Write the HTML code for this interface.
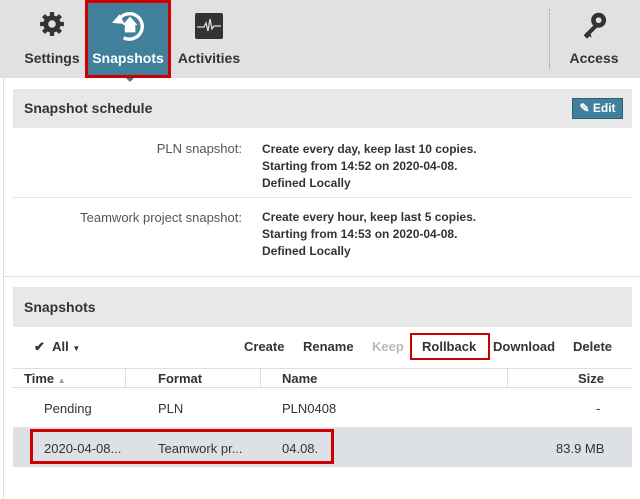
<!DOCTYPE html>
<html><head><style>
*{margin:0;padding:0;box-sizing:border-box}
body{width:640px;height:499px;background:#fff;font-family:"Liberation Sans",sans-serif;font-size:13px;color:#333;position:relative;overflow:hidden}
.a{position:absolute}
.b{font-weight:bold}
.tab{position:absolute;top:0;height:78px;text-align:center;font-weight:bold;font-size:14px;color:#333}
.tab span{position:absolute;left:0;right:0;top:50px}
</style></head><body>
<div class="a" style="left:0;top:0;width:640px;height:78px;background:#e1e1e1"></div>
<div class="tab" style="left:20px;width:64px"><svg class="a" style="left:19px;top:11px" width="26" height="26" viewBox="0 0 24 24"><g fill="#333"><circle cx="12" cy="12" r="8"/><rect x="10" y="1" width="4" height="22"/><rect x="1" y="10" width="22" height="4"/><rect x="10" y="1" width="4" height="22" transform="rotate(45 12 12)"/><rect x="10" y="1" width="4" height="22" transform="rotate(-45 12 12)"/></g><circle cx="12" cy="12" r="3.5" fill="#e1e1e1"/></svg><span>Settings</span></div>
<div class="tab" style="left:85px;width:86px;background:#40809b;border:3px solid #c00;color:#fff"><svg class="a" style="left:23px;top:5px" width="36" height="34" viewBox="0 0 34 32"><path d="M8 10 A12 12 0 1 1 12 28" fill="none" stroke="#fff" stroke-width="3.2"/><path d="M1 14 L8 6 L13 15 Z" fill="#fff"/><path d="M11 16 L18 8 L25 16 H23 V23 H13 V16Z" fill="#fff"/></svg><span style="top:47px">Snapshots</span></div>
<div class="a" style="left:126px;top:78px;border:4px solid transparent;border-top-color:#40809b"></div>
<div class="tab" style="left:174px;width:70px"><svg class="a" style="left:21px;top:13px" width="28" height="26" viewBox="0 0 28 26"><rect width="28" height="26" rx="2" fill="#333"/><path d="M2 14 H9 L11 10 L13 18 L15 6 L17 16 L19 13 H26" fill="none" stroke="#ddd" stroke-width="1.3"/></svg><span>Activities</span></div>
<div class="a" style="left:549px;top:9px;height:60px;border-left:1px dotted #999"></div>
<div class="tab" style="left:565px;width:58px"><svg class="a" style="left:15px;top:11px" width="28" height="30" viewBox="0 0 24 26"><circle cx="16" cy="8" r="6.5" fill="#333"/><circle cx="16" cy="8" r="2.5" fill="#e1e1e1"/><path d="M12 12 L3 21 L6 24 L8 22 L10 23 L9 20 L15 14Z" fill="#333"/></svg><span>Access</span></div>
<div class="a" style="left:3px;top:78px;height:421px;border-left:1px solid #ddd"></div>
<div class="a" style="left:13px;top:89px;width:619px;height:39px;background:#e8e8e8"></div>
<div class="a b" style="left:24px;top:100px;font-size:14px">Snapshot schedule</div>
<div class="a b" style="left:572px;top:98px;width:51px;height:21px;background:#40809b;border:1px solid #2c6077;color:#fff;font-size:12px;line-height:19px;text-align:center">✎ Edit</div>
<div class="a" style="left:0;top:141px;width:242px;text-align:right;color:#555">PLN snapshot:</div>
<div class="a b" style="left:262px;top:141px;line-height:17px;font-size:12px">Create every day, keep last 10 copies.<br>Starting from 14:52 on 2020-04-08.<br>Defined Locally</div>
<div class="a" style="left:13px;top:197px;width:619px;border-top:1px solid #e5e5e5"></div>
<div class="a" style="left:0;top:210px;width:242px;text-align:right;color:#555">Teamwork project snapshot:</div>
<div class="a b" style="left:262px;top:209px;line-height:17px;font-size:12px">Create every hour, keep last 5 copies.<br>Starting from 14:53 on 2020-04-08.<br>Defined Locally</div>
<div class="a" style="left:3px;top:276px;width:637px;border-top:1px solid #e0e0e0"></div>
<div class="a" style="left:13px;top:287px;width:619px;height:40px;background:#e8e8e8"></div>
<div class="a b" style="left:24px;top:299px;font-size:14px">Snapshots</div>
<div class="a b" style="left:34px;top:339px;font-size:13px">✔ &nbsp;All <span style="font-size:8px">▼</span></div>
<div class="a b" style="left:244px;top:339px">Create</div>
<div class="a b" style="left:303px;top:339px">Rename</div>
<div class="a b" style="left:372px;top:339px;color:#bbb">Keep</div>
<div class="a" style="left:410px;top:333px;width:80px;height:27px;border:2px solid #c00"></div>
<div class="a b" style="left:422px;top:339px">Rollback</div>
<div class="a b" style="left:493px;top:339px">Download</div>
<div class="a b" style="left:573px;top:339px">Delete</div>
<div class="a" style="left:13px;top:368px;width:619px;height:20px;border-top:1px solid #ddd;border-bottom:1px solid #ddd"></div>
<div class="a" style="left:125px;top:368px;height:20px;border-left:1px solid #ddd"></div>
<div class="a" style="left:260px;top:368px;height:20px;border-left:1px solid #ddd"></div>
<div class="a" style="left:507px;top:368px;height:20px;border-left:1px solid #ddd"></div>
<div class="a b" style="left:24px;top:371px">Time <span style="font-size:8px;color:#999">▲</span></div>
<div class="a b" style="left:158px;top:371px">Format</div>
<div class="a b" style="left:282px;top:371px">Name</div>
<div class="a b" style="left:578px;top:371px">Size</div>
<div class="a" style="left:44px;top:401px">Pending</div>
<div class="a" style="left:158px;top:401px">PLN</div>
<div class="a" style="left:282px;top:401px">PLN0408</div>
<div class="a" style="left:596px;top:401px">-</div>
<div class="a" style="left:13px;top:427px;width:619px;height:40px;background:#dde1e5;border-top:1px solid #e5e5e5"></div>
<div class="a" style="left:30px;top:429px;width:304px;height:35px;border:3px solid #c00"></div>
<div class="a" style="left:44px;top:441px">2020-04-08...</div>
<div class="a" style="left:158px;top:441px">Teamwork pr...</div>
<div class="a" style="left:282px;top:441px">04.08.</div>
<div class="a" style="left:556px;top:441px">83.9 MB</div>
</body></html>
